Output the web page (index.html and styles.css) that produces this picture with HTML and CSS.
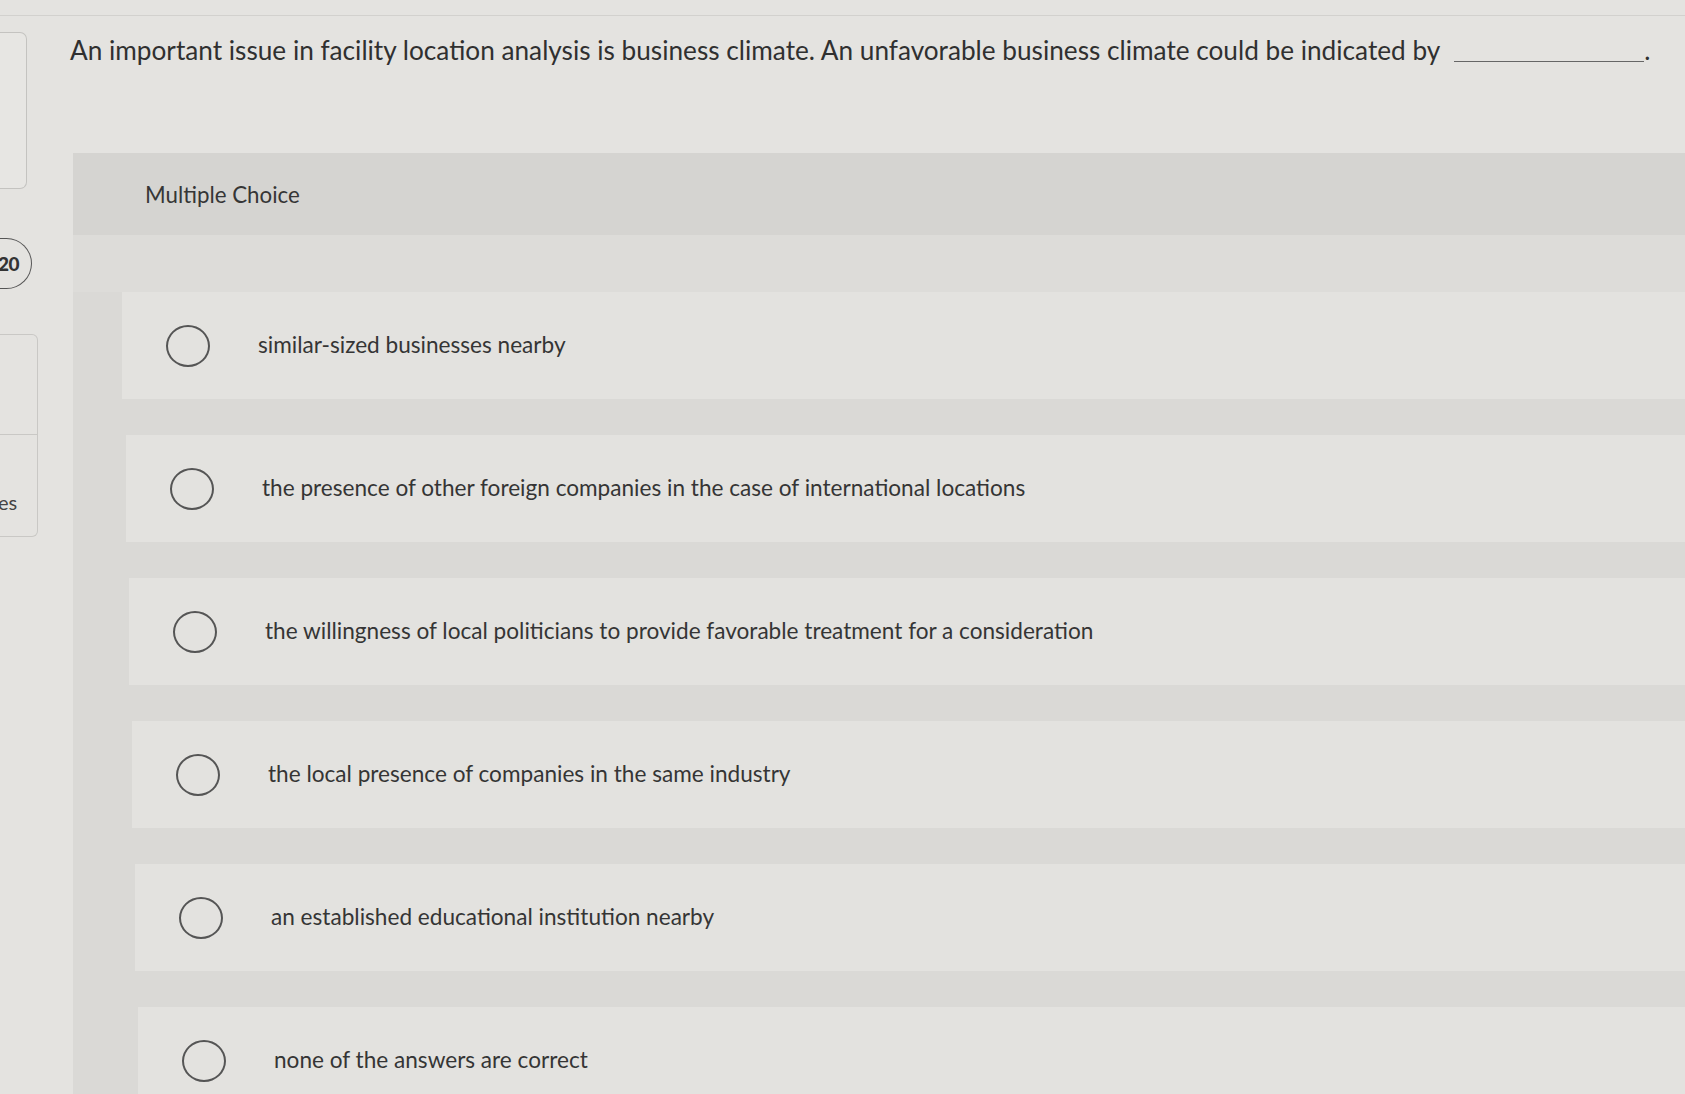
FILE: index.html
```html
<!DOCTYPE html>
<html lang="en">
<head>
<meta charset="utf-8">
<title>Multiple Choice</title>
<link rel="stylesheet" href="styles.css">
</head>
<body>
<div class="page">
  <aside class="sidebar">
    <div class="side-box"></div>
    <div class="badge">20</div>
    <div class="side-list">
      <div class="side-item"></div>
      <div class="side-item side-item-last"><span>es</span></div>
    </div>
  </aside>
  <main class="main">
    <p class="question">An important issue in facility location analysis is business climate. An unfavorable business climate could be indicated by <span class="blank"></span>.</p>
    <section class="panel">
      <div class="panel-header">Multiple Choice</div>
      <div class="panel-pre"></div>
      <ul class="options">
        <li class="option"><span class="radio"></span><span class="label">similar-sized businesses nearby</span></li>
        <li class="option"><span class="radio"></span><span class="label">the presence of other foreign companies in the case of international locations</span></li>
        <li class="option"><span class="radio"></span><span class="label">the willingness of local politicians to provide favorable treatment for a consideration</span></li>
        <li class="option"><span class="radio"></span><span class="label">the local presence of companies in the same industry</span></li>
        <li class="option"><span class="radio"></span><span class="label">an established educational institution nearby</span></li>
        <li class="option"><span class="radio"></span><span class="label">none of the answers are correct</span></li>
      </ul>
    </section>
  </main>
</div>
</body>
</html>
```

FILE: styles.css
```css
html, body {
  margin: 0;
  padding: 0;
}
body {
  background: #e4e3e0;
  font-family: Lato, "Open Sans", "Liberation Sans", sans-serif;
  color: #333;
  overflow: hidden;
  height: 1094px;
}
.page {
  display: flex;
  border-top: 1px solid #d2d1ce;
  margin-top: 15px;
  min-height: 1079px;
}
.sidebar {
  width: 40px;
  flex: none;
  display: flex;
  flex-direction: column;
  align-items: flex-end;
}
.side-box {
  width: 40px;
  height: 155px;
  margin-top: 16px;
  margin-right: 13px;
  border: 1.5px solid #c4c3c0;
  border-left: none;
  border-radius: 0 7px 7px 0;
  background: #e7e6e3;
}
.badge {
  margin-top: 49px;
  margin-right: 8px;
  width: 48px;
  height: 51px;
  border: 1.5px solid #555;
  border-left: none;
  border-radius: 0 26px 26px 0;
  display: flex;
  align-items: center;
  justify-content: flex-end;
  padding-right: 12px;
  box-sizing: border-box;
  font-weight: 900;
  font-size: 19px;
  color: #333;
  letter-spacing: -0.5px;
}
.side-list {
  margin-top: 45px;
  margin-right: 2px;
  width: 40px;
  border: 1.5px solid #c9c8c5;
  border-left: none;
  border-radius: 0 6px 6px 0;
  display: flex;
  flex-direction: column;
}
.side-item {
  height: 99px;
  border-bottom: 1.5px solid #c9c8c5;
}
.side-item-last {
  height: 101px;
  border-bottom: none;
  display: flex;
  align-items: center;
  justify-content: flex-start;
}
.side-item-last span {
  font-size: 20px;
  color: #444;
  margin-top: 32px;
  padding-left: 1px;
}
.main {
  flex: 1;
  display: flex;
  flex-direction: column;
}
.question {
  margin: 18px 0 0 30px;
  font-size: 26.2px;
  line-height: 32px;
  color: #303030;
  white-space: nowrap;
}
.blank {
  display: inline-block;
  width: 190px;
  border-bottom: 1.5px solid #666;
  margin-left: 8px;
  vertical-align: -2px;
}
.panel {
  margin-top: 87px;
  margin-left: 33px;
  background: #dad9d6;
  flex: 1;
}
.panel-header {
  height: 82px;
  background: #d5d4d1;
  display: flex;
  align-items: center;
  padding-left: 72px;
  font-size: 22.3px;
  color: #363636;
}
.panel-pre {
  height: 57px;
  background: #dddcd9;
}
.options {
  list-style: none;
  margin: 0;
  padding: 0 0 0 49px;
  display: flex;
  flex-direction: column;
  gap: 36px;
}
.option {
  height: 107px;
  background: #e3e2df;
  display: flex;
  align-items: center;
  padding-left: 44px;
}
.option:nth-child(2) { margin-left: 4px; }
.option:nth-child(3) { margin-left: 7px; }
.option:nth-child(4) { margin-left: 10px; }
.option:nth-child(5) { margin-left: 13px; }
.option:nth-child(6) { margin-left: 16px; }
.radio {
  flex: none;
  width: 44px;
  height: 42px;
  border: 2px solid #555;
  border-radius: 50%;
  box-sizing: border-box;
}
.label {
  margin-left: 48px;
  font-size: 22.6px;
  color: #353535;
  margin-top: -3px;
}
```
